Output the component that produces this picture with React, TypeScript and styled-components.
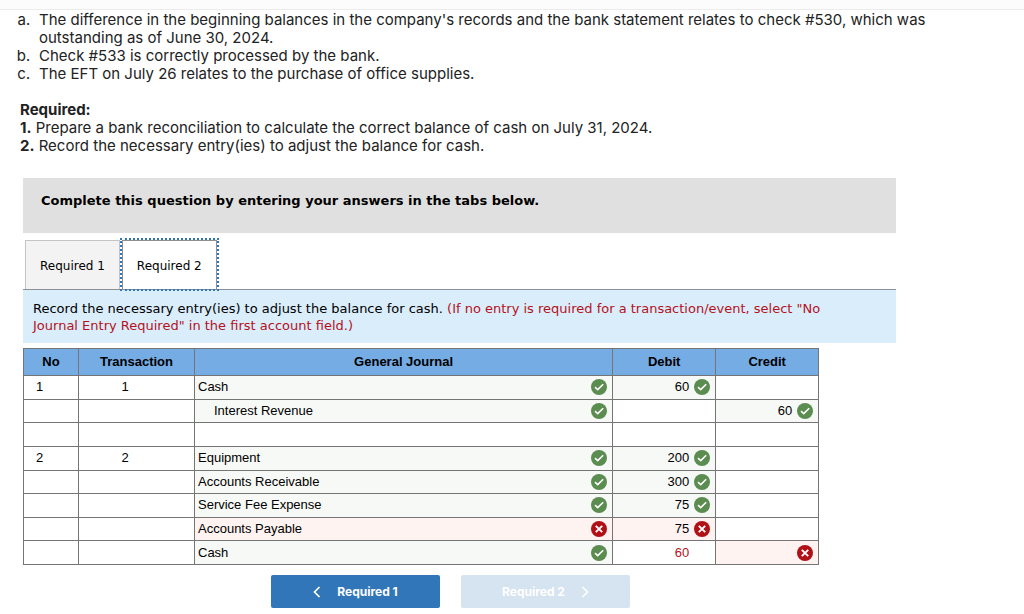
import React from "react";
import styled, { createGlobalStyle } from "styled-components";

const GlobalStyle = createGlobalStyle`
  * { box-sizing: border-box; }
  body {
    margin: 0;
    background: #fff;
    color: #222;
    font-family: "Liberation Sans", Arial, sans-serif;
  }
`;

const TopBar = styled.div`
  height: 10px;
  background: #fcfcfc;
  border-bottom: 1px solid #ececec;
`;

const Page = styled.main`
  padding: 0 20px 6px;
`;

const Prose = styled.section`
  max-width: 928px;
  padding-top: 1px;
  font-family: Inter, sans-serif;
  font-size: 15px;
  line-height: 18px;
`;

const Notes = styled.ol`
  margin: 0;
  padding: 0 0 0 14px;
  list-style: lower-alpha;
`;

const Note = styled.li`
  padding-left: 5px;
`;

const Requirements = styled.div`
  margin-top: 18px;
`;

const Line = styled.p`
  margin: 0;
`;

const Work = styled.section`
  margin: 23px 108px 0 3px;
`;

const Banner = styled.h2`
  margin: 0;
  padding: 14px 18px 23px;
  background: #e0e0e0;
  color: #000;
  font: bold 13px/18px "DejaVu Sans", Verdana, sans-serif;
`;

const Tabs = styled.div`
  display: flex;
  gap: 2px;
  padding: 7px 2px 0;
  border-bottom: 1px solid #8c9196;
`;

const Tab = styled.button<{ $active?: boolean }>`
  height: 49px;
  padding: 2px 14px 0;
  border: 1px solid ${(p) => (p.$active ? "#8f8f8f" : "#c4c4c4")};
  border-bottom: 0;
  background: ${(p) => (p.$active ? "#fff" : "#f3f3f3")};
  color: #000;
  font: 12px/16px "DejaVu Sans", Verdana, sans-serif;
  outline: ${(p) => (p.$active ? "2px dotted #2f76b8" : "none")};
`;

const Instruction = styled.p`
  margin: 0 0 5px;
  padding: 10px 40px 9px 10px;
  background: #d9edfb;
  color: #000;
  font: 13px/17px "DejaVu Sans", Verdana, sans-serif;
`;

const Hint = styled.span`
  color: #b5121b;
`;

const Journal = styled.table`
  width: 91.2%;
  height: 217px;
  table-layout: fixed;
  border-collapse: collapse;
  color: #000;
  font-size: 13px;
  line-height: 16px;
`;

const Col = styled.col<{ $width?: number }>`
  width: ${(p) => (p.$width ? `${p.$width}px` : "auto")};
`;

const HeadCell = styled.th`
  height: 27px;
  padding: 0;
  border: 1px solid #757575;
  background: #75ace4;
`;

type Mark = "ok" | "bad";
type Align = "start" | "center" | "end";

const BodyCell = styled.td<{ $mark?: Mark }>`
  padding: 0 5px 0 3px;
  border: 1px solid #757575;
  background: ${(p) =>
    p.$mark === "ok" ? "#f7f9f6" : p.$mark === "bad" ? "#fff3f2" : "#fff"};
`;

const Value = styled.div<{ $align: Align; $indent?: boolean; $wrong?: boolean }>`
  display: grid;
  grid-template-columns: 1fr 16px;
  align-items: center;
  gap: 5px;
  min-height: 16px;
  padding-left: ${(p) => (p.$indent ? "16px" : "0")};
  text-align: ${(p) => p.$align};
  color: ${(p) => (p.$wrong ? "#b5121b" : "#000")};
`;

const MarkSvg = styled.svg`
  display: block;
  width: 16px;
  height: 16px;
`;

const Nav = styled.nav`
  display: flex;
  gap: 21px;
  margin: 10px 0 0 248px;
`;

const NavButton = styled.button`
  display: flex;
  align-items: center;
  justify-content: center;
  gap: 16px;
  width: 169px;
  height: 33px;
  padding: 0;
  border: 0;
  border-radius: 2px;
  background: #3176b9;
  color: #fff;
  font: bold 12px/16px Inter, sans-serif;
  &:disabled {
    background: #d6e3f0;
  }
`;

function StatusMark({ mark }: { mark: Mark }) {
  return (
    <MarkSvg viewBox="0 0 16 16" role="img" aria-label={mark === "ok" ? "Correct" : "Incorrect"}>
      <circle cx="8" cy="8" r="8" fill={mark === "ok" ? "#5b8c50" : "#b01116"} />
      <path
        d={mark === "ok" ? "M4 8.2 6.7 10.6 12.2 5.2" : "M4.8 4.8 11.2 11.2 M11.2 4.8 4.8 11.2"}
        fill="none"
        stroke="#fff"
        strokeWidth={mark === "ok" ? 1.6 : 1.9}
      />
    </MarkSvg>
  );
}

function Chevron({ left }: { left?: boolean }) {
  return (
    <svg width="8" height="12" viewBox="0 0 8 12" aria-hidden="true">
      <path
        d={left ? "M6.5 1 1.5 6 6.5 11" : "M1.5 1 6.5 6 1.5 11"}
        fill="none"
        stroke="currentColor"
        strokeWidth="1.7"
      />
    </svg>
  );
}

interface CellData {
  text?: string;
  mark?: Mark;
  indent?: boolean;
  wrong?: boolean;
}

const rows: CellData[][] = [
  [{ text: "1" }, { text: "1" }, { text: "Cash", mark: "ok" }, { text: "60", mark: "ok" }, {}],
  [{}, {}, { text: "Interest Revenue", mark: "ok", indent: true }, {}, { text: "60", mark: "ok" }],
  [{}, {}, {}, {}, {}],
  [{ text: "2" }, { text: "2" }, { text: "Equipment", mark: "ok" }, { text: "200", mark: "ok" }, {}],
  [{}, {}, { text: "Accounts Receivable", mark: "ok" }, { text: "300", mark: "ok" }, {}],
  [{}, {}, { text: "Service Fee Expense", mark: "ok" }, { text: "75", mark: "ok" }, {}],
  [{}, {}, { text: "Accounts Payable", mark: "bad" }, { text: "75", mark: "bad" }, {}],
  [{}, {}, { text: "Cash", mark: "ok" }, { text: "60", wrong: true }, { mark: "bad" }],
];

const columns: { title: string; align: Align; width?: number }[] = [
  { title: "No", align: "center", width: 55 },
  { title: "Transaction", align: "center", width: 116 },
  { title: "General Journal", align: "start" },
  { title: "Debit", align: "end", width: 103 },
  { title: "Credit", align: "end", width: 103 },
];

export default function App() {
  return (
    <>
      <GlobalStyle />
      <TopBar />
      <Page>
        <Prose>
          <Notes>
            <Note>
              The difference in the beginning balances in the company's records and the bank
              statement relates to check #530, which was outstanding as of June 30, 2024.
            </Note>
            <Note>Check #533 is correctly processed by the bank.</Note>
            <Note>The EFT on July 26 relates to the purchase of office supplies.</Note>
          </Notes>
          <Requirements>
            <Line><b>Required:</b></Line>
            <Line><b>1.</b> Prepare a bank reconciliation to calculate the correct balance of cash on July 31, 2024.</Line>
            <Line><b>2.</b> Record the necessary entry(ies) to adjust the balance for cash.</Line>
          </Requirements>
        </Prose>

        <Work>
          <Banner>Complete this question by entering your answers in the tabs below.</Banner>
          <Tabs role="tablist">
            <Tab role="tab" aria-selected="false">Required 1</Tab>
            <Tab role="tab" aria-selected="true" $active>Required 2</Tab>
          </Tabs>
          <Instruction>
            Record the necessary entry(ies) to adjust the balance for cash.{" "}
            <Hint>
              (If no entry is required for a transaction/event, select "No Journal Entry Required"
              in the first account field.)
            </Hint>
          </Instruction>
          <Journal>
            <colgroup>
              {columns.map((c) => <Col key={c.title} $width={c.width} />)}
            </colgroup>
            <thead>
              <tr>
                {columns.map((c) => <HeadCell key={c.title} scope="col">{c.title}</HeadCell>)}
              </tr>
            </thead>
            <tbody>
              {rows.map((row, r) => (
                <tr key={r}>
                  {row.map((cell, c) => (
                    <BodyCell key={c} $mark={cell.mark}>
                      <Value $align={columns[c].align} $indent={cell.indent} $wrong={cell.wrong}>
                        <span>{cell.text}</span>
                        {cell.mark && <StatusMark mark={cell.mark} />}
                      </Value>
                    </BodyCell>
                  ))}
                </tr>
              ))}
            </tbody>
          </Journal>
          <Nav aria-label="Question parts">
            <NavButton><Chevron left />Required 1</NavButton>
            <NavButton disabled>Required 2<Chevron /></NavButton>
          </Nav>
        </Work>
      </Page>
    </>
  );
}
